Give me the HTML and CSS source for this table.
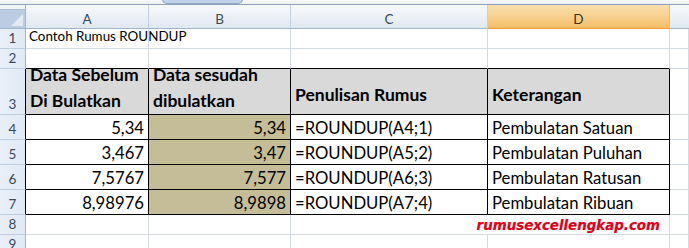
FILE: index.html
```html
<!DOCTYPE html>
<html>
<head>
<meta charset="utf-8">
<link rel="stylesheet" href="styles.css">
</head>
<body>
<div class="topbar"><div class="tab"></div></div>
<div class="sheet">
  <div class="c corner"><div class="corner-box"><svg class="tri" width="12" height="12" viewBox="0 0 12 12"><polygon points="12,0 12,12 0,12" fill="#e3e9f1"/></svg></div></div>
  <div class="c ch">A</div>
  <div class="c ch">B</div>
  <div class="c ch">C</div>
  <div class="c ch sel">D</div>
  <div class="c ch last"></div>

  <div class="c rh">1</div>
  <div class="c txt small">Contoh Rumus ROUNDUP</div>
  <div class="c"></div>
  <div class="c"></div>
  <div class="c"></div>
  <div class="c"></div>

  <div class="c rh">2</div>
  <div class="c topb"></div>
  <div class="c topb"></div>
  <div class="c topb"></div>
  <div class="c topb"></div>
  <div class="c"></div>

  <div class="c rh tb">3</div>
  <div class="c tbl hd wrap">Data Sebelum Di Bulatkan</div>
  <div class="c tbl hd wrap">Data sesudah dibulatkan</div>
  <div class="c tbl hd mid">Penulisan Rumus</div>
  <div class="c tbl hd mid">Keterangan</div>
  <div class="c"></div>

  <div class="c rh tb">4</div>
  <div class="c tbl num">5,34</div>
  <div class="c tbl num tan">5,34</div>
  <div class="c tbl txt">=ROUNDUP(A4;1)</div>
  <div class="c tbl txt">Pembulatan Satuan</div>
  <div class="c"></div>

  <div class="c rh tb">5</div>
  <div class="c tbl num">3,467</div>
  <div class="c tbl num tan">3,47</div>
  <div class="c tbl txt">=ROUNDUP(A5;2)</div>
  <div class="c tbl txt">Pembulatan Puluhan</div>
  <div class="c"></div>

  <div class="c rh tb">6</div>
  <div class="c tbl num">7,5767</div>
  <div class="c tbl num tan">7,577</div>
  <div class="c tbl txt">=ROUNDUP(A6;3)</div>
  <div class="c tbl txt">Pembulatan Ratusan</div>
  <div class="c"></div>

  <div class="c rh tb">7</div>
  <div class="c tbl num">8,98976</div>
  <div class="c tbl num tan">8,9898</div>
  <div class="c tbl txt">=ROUNDUP(A7;4)</div>
  <div class="c tbl txt">Pembulatan Ribuan</div>
  <div class="c"></div>

  <div class="c rh">8</div>
  <div class="c"></div>
  <div class="c"></div>
  <div class="c span2 brand">rumusexcellengkap.com</div>
  <div class="c"></div>

  <div class="c rh">9</div>
  <div class="c"></div>
  <div class="c"></div>
  <div class="c"></div>
  <div class="c"></div>
  <div class="c"></div>
</div>
</body>
</html>
```

FILE: styles.css
```css
html, body {
  margin: 0;
  padding: 0;
  background: #ffffff;
  overflow: hidden;
}

body {
  width: 689px;
  height: 248px;
  font-family: Lato, "Liberation Sans", sans-serif;
  color: #000;
}

.topbar {
  height: 4px;
  border-bottom: 1px solid #8ea2bd;
  background: linear-gradient(to bottom, #f7f8fa, #eceff3);
  position: relative;
}

.tab {
  position: absolute;
  left: 162px;
  top: -1px;
  width: 79px;
  height: 4px;
  background: #c1d3ea;
  border: 1px solid #8fa7c6;
  border-top: none;
  border-radius: 0 0 6px 6px;
}

.sheet {
  display: grid;
  grid-template-columns: 26px 123px 142px 197px 182px 1fr;
  grid-template-rows: 24px 20px 20px 46px 25px 25px 25px 25px 20px 20px;
}

.c {
  box-sizing: border-box;
  border-right: 1px solid #d4dae4;
  border-bottom: 1px solid #d4dae4;
  display: flex;
  align-items: flex-end;
  white-space: nowrap;
  overflow: visible;
  min-width: 0;
}

.corner {
  background: linear-gradient(to bottom, #f1f4f8, #e9eef5);
  border-right: 1px solid #9eb6ce;
  border-bottom: 1px solid #9eb6ce;
  padding-top: 4px;
  align-items: stretch;
}

.corner-box {
  flex: 1;
  background: #bccde3;
  border-top: 1px solid #a9bdd6;
  position: relative;
}

.tri {
  position: absolute;
  right: 2px;
  bottom: 2px;
}

.ch {
  background: linear-gradient(to bottom, #f6f8fb 0%, #eef2f7 45%, #e0e7f0 100%);
  border-right: 1px solid #c2d0e1;
  border-bottom: 1px solid #9eb6ce;
  justify-content: center;
  align-items: center;
  padding-top: 4px;
  font-size: 13.5px;
  color: #3a4a5e;
}

.ch.sel {
  background: linear-gradient(to bottom, #fadfae 0%, #f8d292 45%, #f3bc66 100%);
  border-right: 1px solid #f0b865;
  border-bottom: 1px solid #f29b3a;
  color: #3d3420;
}

.ch.last {
  border-right: none;
}

.rh {
  background: linear-gradient(to right, #e9eff8, #e1e9f4);
  border-right: 1px solid #9eb6ce;
  border-bottom: 1px solid #bfcde0;
  justify-content: center;
  font-size: 13.5px;
  color: #3a4a5e;
  padding-bottom: 2px;
  line-height: 16px;
}

.rh.tb {
  border-right-color: #000;
}

.txt {
  padding-left: 4px;
  font-size: 16.7px;
  line-height: 20px;
  padding-bottom: 1px;
}

.txt.small {
  font-size: 13.4px;
  padding-left: 3px;
  padding-bottom: 2px;
}

.num {
  justify-content: flex-end;
  padding-right: 4px;
  font-size: 16.7px;
  line-height: 20px;
  padding-bottom: 1px;
}

.topb {
  border-bottom-color: #000;
}

.tbl {
  border-right-color: #000;
  border-bottom-color: #000;
}

.tan {
  background: #c4bd97;
}

.hd {
  background: #d9d9d9;
  font-weight: bold;
  font-size: 17.5px;
  line-height: 26px;
  padding-left: 4px;
}

.hd.wrap {
  white-space: normal;
  padding-right: 2px;
  padding-bottom: 0;
}

.hd.mid {
  align-items: center;
  padding-top: 6px;
}

.span2 {
  grid-column: span 2;
}

.brand {
  justify-content: flex-end;
  padding-right: 9px;
  font-family: "DejaVu Sans", Verdana, sans-serif;
  font-weight: bold;
  font-style: italic;
  font-size: 13.4px;
  line-height: 16px;
  padding-bottom: 0;
  color: #e2001a;
  text-shadow: 0 0 1px rgba(120, 0, 0, 0.35);
}
```
